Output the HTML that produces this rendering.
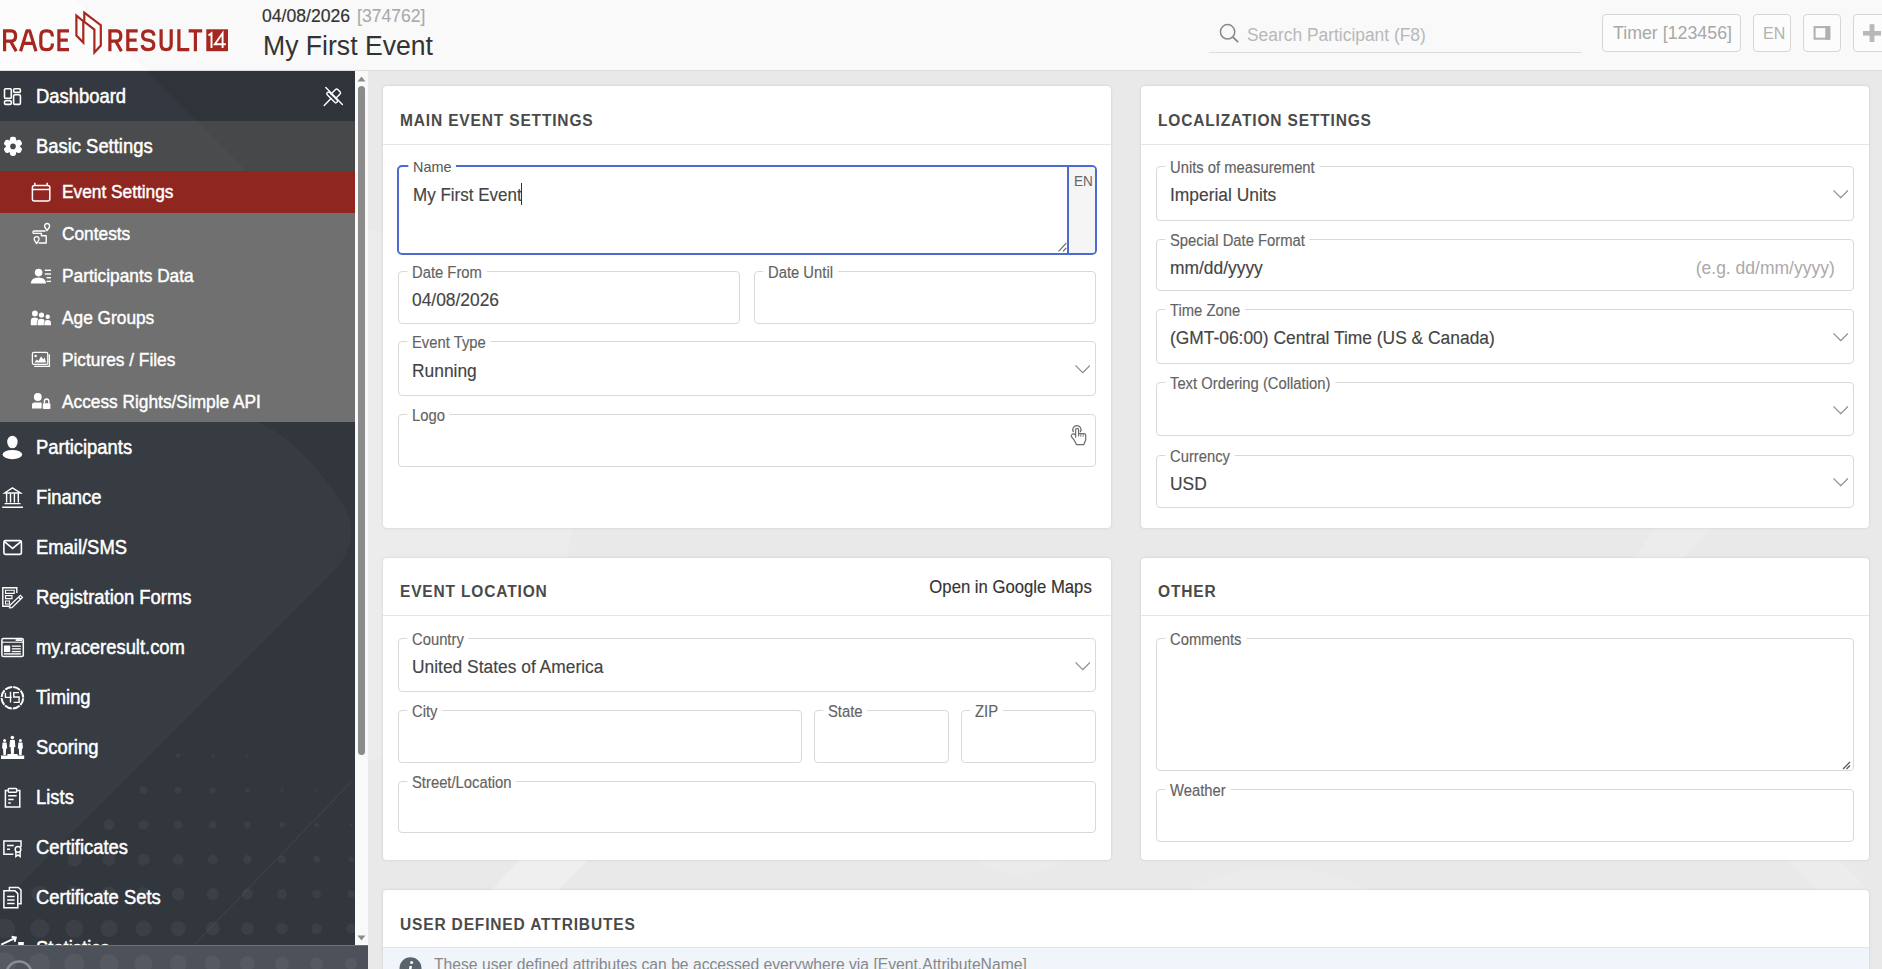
<!DOCTYPE html><html><head><meta charset="utf-8"><style>
html,body{margin:0;padding:0;}
body{width:1882px;height:969px;overflow:hidden;position:relative;background:#e9e9e9;font-family:"Liberation Sans", sans-serif;}
.t{position:absolute;white-space:nowrap;}
svg{overflow:hidden}
</style></head><body>
<div style="position:absolute;left:368px;top:71px;width:1514px;height:898px;background:#e9e9e9;"></div>
<svg style="position:absolute;left:368px;top:71px;" width="1514" height="898" viewBox="368 71 1514 898">
<circle cx="300" cy="495" r="274" fill="#ececec"/>
<polygon points="1656.7,527 1712.8,527 1682.7,559 1632.9,559" fill="#ececec"/>
<polygon points="520.7,859 588.8,859 557.6,891 490.7,891" fill="#efefef"/>
<polygon points="1786.6,859 1838.5,859 1870,891 1817.7,891" fill="#ececec"/>
<circle cx="1020" cy="800" r="74" fill="#ebebeb"/>
<circle cx="1277" cy="1050" r="183" fill="#ebebeb"/>


</svg>
<div style="position:absolute;left:0px;top:0px;width:1882px;height:70px;background:#f9f9f9;"></div>
<svg style="position:absolute;left:0px;top:0px;" width="1882" height="70" viewBox="0 0 1882 70"><polygon points="0,0 76,0 146,70 0,70" fill="#fcfcfc"/></svg>
<div style="position:absolute;left:0px;top:70px;width:1882px;height:1px;background:#dddddd;"></div>
<svg style="position:absolute;left:0px;top:0px;" width="240" height="70" viewBox="0 0 240 70"><g fill="none" stroke="#a5271f" stroke-width="3.2" stroke-linejoin="miter" stroke-linecap="butt">
<path d="M4.6,51.2 V30.9 H11.2 Q15.6,30.9 15.6,36 Q15.6,41.2 11.2,41.2 H4.6 M10.6,41.2 L16.2,51.2"/>
<path d="M20.6,51.2 L26.9,30.9 H29.7 L36,51.2 M23.6,43.4 H33" stroke-linejoin="round"/>
<path d="M52.4,36.6 Q52.4,30.9 47.3,30.9 H45.8 Q40.8,30.9 40.8,36.4 V44.2 Q40.8,49.6 45.8,49.6 H47.3 Q52.4,49.6 52.4,43.4"/>
<path d="M69,30.9 H58.9 V49.6 H69 M58.9,40.2 H67.8"/>
<path d="M109.9,51.2 V30.9 H116.4 Q120.8,30.9 120.8,36 Q120.8,41.2 116.4,41.2 H109.9 M115.8,41.2 L121.4,51.2"/>
<path d="M137.7,30.9 H127.8 V49.6 H137.7 M127.8,40.2 H136.6"/>
<path d="M154,35.6 Q153.6,30.9 148.2,30.9 Q142.6,30.9 142.6,35.4 Q142.6,39.6 148.2,40.2 Q153.8,40.8 153.8,45 Q153.8,49.6 148.2,49.6 Q142.6,49.6 142.2,45"/>
<path d="M161.1,29.3 V44.2 Q161.1,49.6 166.1,49.6 Q171.2,49.6 171.2,44.2 V29.3"/>
<path d="M178.9,29.3 V49.6 H189.3"/>
<path d="M188.6,30.9 H202.2 M195.4,30.9 V51.2"/>
</g>
<g fill="none" stroke="#a5271f" stroke-width="2.2" stroke-linejoin="miter">
<path d="M76.4,15.6 L83.3,21.2 V42.5 L76.4,35.6 Z"/>
<path d="M84.3,12.6 L100.8,25.2 V45.6 L94.4,52.4 V29.6 L84.3,21.8 Z"/>
</g>
<rect x="206.3" y="29.3" width="21.7" height="21.9" fill="#a5271f"/>
<g fill="none" stroke="#fff" stroke-width="1.9">
<path d="M208.5,35.4 L211.5,33.2 V48"/>
<path d="M222.6,48 V33.2 L214.8,44.2 H225.8"/>
</g></svg>
<div class="t" style="left:262px;top:3.97px;font-size:18.83px;line-height:24px;color:#333;font-weight:400;letter-spacing:0.00px;-webkit-text-stroke:0.2px #333;transform:scaleX(0.9346);transform-origin:0 0;">04/08/2026</div>
<div class="t" style="left:357px;top:3.97px;font-size:18.83px;line-height:24px;color:#aaa;font-weight:400;letter-spacing:0.00px;-webkit-text-stroke:0.1px #aaa;transform:scaleX(0.9346);transform-origin:0 0;">[374762]</div>
<div class="t" style="left:263px;top:26.64px;font-size:28.46px;line-height:37px;color:#333;font-weight:400;letter-spacing:0.00px;transform:scaleX(0.9346);transform-origin:0 0;">My First Event</div>
<div style="position:absolute;left:1209px;top:52px;width:373px;height:1px;background:#dddddd;"></div>
<svg style="position:absolute;left:1215px;top:20px;" width="30" height="30" viewBox="1215 20 30 30"><circle cx="1227.6" cy="31.8" r="7.2" fill="none" stroke="#8a8a8a" stroke-width="1.5"/><path d="M1232.8,37 L1238.2,42.2" stroke="#8a8a8a" stroke-width="1.8"/></svg>
<div class="t" style="left:1247px;top:22.55px;font-size:18.62px;line-height:24px;color:#b8b8b8;font-weight:400;letter-spacing:0.00px;transform:scaleX(0.9346);transform-origin:0 0;">Search Participant (F8)</div>
<div style="position:absolute;left:1602px;top:14px;width:139px;height:38px;box-sizing:border-box;border:1px solid #d6d6d6;border-radius:4px;background:#fcfcfc;"></div>
<div style="position:absolute;left:1753px;top:14px;width:38px;height:38px;box-sizing:border-box;border:1px solid #d6d6d6;border-radius:4px;background:#fcfcfc;"></div>
<div style="position:absolute;left:1803px;top:14px;width:38px;height:38px;box-sizing:border-box;border:1px solid #d6d6d6;border-radius:4px;background:#fcfcfc;"></div>
<div style="position:absolute;left:1853px;top:14px;width:40px;height:38px;box-sizing:border-box;border:1px solid #d6d6d6;border-radius:4px;background:#fcfcfc;"></div>
<div class="t" style="left:1613px;top:20.40px;font-size:19.05px;line-height:25px;color:#a8a8a8;font-weight:400;letter-spacing:0.00px;transform:scaleX(0.9346);transform-origin:0 0;">Timer [123456]</div>
<div class="t" style="left:1762.5px;top:23.07px;font-size:17.12px;line-height:22px;color:#b2b2b2;font-weight:400;letter-spacing:0.00px;transform:scaleX(0.9346);transform-origin:0 0;">EN</div>
<svg style="position:absolute;left:1810px;top:20px;" width="30" height="30" viewBox="1810 20 30 30"><rect x="1814.6" y="27.1" width="14.6" height="11.6" fill="none" stroke="#b0b0b0" stroke-width="2"/><rect x="1825.3" y="26.1" width="5" height="13.6" fill="#b0b0b0"/></svg>
<svg style="position:absolute;left:1860px;top:20px;" width="25" height="25" viewBox="1860 20 25 25"><rect x="1863" y="31" width="18" height="4.6" fill="#b8b8b8"/><rect x="1869.6" y="24.2" width="4.8" height="17.8" fill="#b8b8b8"/></svg>
<div style="position:absolute;left:0px;top:71px;width:355px;height:874px;background:#32363d;"></div>
<svg style="position:absolute;left:0px;top:71px;" width="355" height="874" viewBox="0 71 355 874">
<path d="M0,422 L258,422 Q300,440 340,500 Q365,535 335,570 L0,905 Z" fill="#373b42"/>
<g fill="#ffffff" fill-opacity="0.05">
<circle cx="5.2" cy="928.6" r="10.0"/><circle cx="5.2" cy="963.2" r="11.1"/><circle cx="39.8" cy="894.0" r="8.5"/><circle cx="39.8" cy="928.6" r="9.5"/><circle cx="39.8" cy="963.2" r="10.6"/><circle cx="74.4" cy="859.4" r="6.9"/><circle cx="74.4" cy="894.0" r="8.0"/><circle cx="74.4" cy="928.6" r="9.0"/><circle cx="74.4" cy="963.2" r="10.0"/><circle cx="109.0" cy="824.8" r="5.4"/><circle cx="109.0" cy="859.4" r="6.4"/><circle cx="109.0" cy="894.0" r="7.5"/><circle cx="109.0" cy="928.6" r="8.5"/><circle cx="109.0" cy="963.2" r="9.5"/><circle cx="143.6" cy="790.2" r="3.8"/><circle cx="143.6" cy="824.8" r="4.9"/><circle cx="143.6" cy="859.4" r="5.9"/><circle cx="143.6" cy="894.0" r="6.9"/><circle cx="143.6" cy="928.6" r="8.0"/><circle cx="143.6" cy="963.2" r="9.0"/><circle cx="178.2" cy="755.6" r="2.3"/><circle cx="178.2" cy="790.2" r="3.3"/><circle cx="178.2" cy="824.8" r="4.3"/><circle cx="178.2" cy="859.4" r="5.4"/><circle cx="178.2" cy="894.0" r="6.4"/><circle cx="178.2" cy="928.6" r="7.5"/><circle cx="178.2" cy="963.2" r="8.5"/><circle cx="212.8" cy="721.0" r="0.8"/><circle cx="212.8" cy="755.6" r="1.7"/><circle cx="212.8" cy="790.2" r="2.8"/><circle cx="212.8" cy="824.8" r="3.8"/><circle cx="212.8" cy="859.4" r="4.9"/><circle cx="212.8" cy="894.0" r="5.9"/><circle cx="212.8" cy="928.6" r="6.9"/><circle cx="212.8" cy="963.2" r="8.0"/><circle cx="247.4" cy="721.0" r="0.8"/><circle cx="247.4" cy="755.6" r="1.2"/><circle cx="247.4" cy="790.2" r="2.3"/><circle cx="247.4" cy="824.8" r="3.3"/><circle cx="247.4" cy="859.4" r="4.3"/><circle cx="247.4" cy="894.0" r="5.4"/><circle cx="247.4" cy="928.6" r="6.4"/><circle cx="247.4" cy="963.2" r="7.5"/><circle cx="282.0" cy="721.0" r="0.8"/><circle cx="282.0" cy="755.6" r="0.8"/><circle cx="282.0" cy="790.2" r="1.7"/><circle cx="282.0" cy="824.8" r="2.8"/><circle cx="282.0" cy="859.4" r="3.8"/><circle cx="282.0" cy="894.0" r="4.9"/><circle cx="282.0" cy="928.6" r="5.9"/><circle cx="282.0" cy="963.2" r="6.9"/><circle cx="316.6" cy="721.0" r="0.8"/><circle cx="316.6" cy="755.6" r="0.8"/><circle cx="316.6" cy="790.2" r="1.2"/><circle cx="316.6" cy="824.8" r="2.3"/><circle cx="316.6" cy="859.4" r="3.3"/><circle cx="316.6" cy="894.0" r="4.3"/><circle cx="316.6" cy="928.6" r="5.4"/><circle cx="316.6" cy="963.2" r="6.4"/><circle cx="351.2" cy="721.0" r="0.8"/><circle cx="351.2" cy="755.6" r="0.8"/><circle cx="351.2" cy="790.2" r="0.8"/><circle cx="351.2" cy="824.8" r="1.7"/><circle cx="351.2" cy="859.4" r="2.8"/><circle cx="351.2" cy="894.0" r="3.8"/><circle cx="351.2" cy="928.6" r="4.9"/><circle cx="351.2" cy="963.2" r="5.9"/>
</g>
<path d="M352,781 L190,949" stroke="#ffffff" stroke-opacity="0.05" stroke-width="1.2"/>

</svg>
<div style="position:absolute;left:0px;top:71px;width:355px;height:50px;background:#2f333a;"></div>
<svg style="position:absolute;left:0px;top:71px;" width="355" height="50" viewBox="0 71 355 50"><polygon points="0,71 147,71 197,121 0,121" fill="#343840"/></svg>
<div style="position:absolute;left:0px;top:121px;width:355px;height:50px;background:#474849;"></div>
<svg style="position:absolute;left:0px;top:121px;" width="355" height="50" viewBox="0 121 355 50"><polygon points="0,121 197,121 247,171 0,171" fill="#4a4b4c"/></svg>
<div style="position:absolute;left:0px;top:171px;width:355px;height:42px;background:#8f2620;"></div>
<div style="position:absolute;left:0px;top:213px;width:355px;height:209px;background:#6f706f;"></div>
<div style="position:absolute;left:355px;top:71px;width:13px;height:874px;background:#f9f9f9;"></div>
<div style="position:absolute;left:358px;top:86px;width:7px;height:669px;background:#8b8b8b;border-radius:4px;"></div>
<svg style="position:absolute;left:357px;top:76px;" width="9" height="6" viewBox="357 76 9 6"><polygon points="357.5,81.5 361.5,76.5 365.5,81.5" fill="#8b8b8b"/></svg>
<svg style="position:absolute;left:357px;top:935px;" width="9" height="6" viewBox="357 935 9 6"><polygon points="357.5,935.5 361.5,940.5 365.5,935.5" fill="#8b8b8b"/></svg>
<svg style="position:absolute;left:0px;top:71px;" width="355" height="874" viewBox="0 71 355 874">
<g fill="none" stroke="#fff" stroke-width="1.6">
 <rect x="4.5" y="88.8" width="6.8" height="9.6" rx="1.2"/>
 <rect x="4.5" y="100.8" width="6.8" height="3.6" rx="1.2"/>
 <rect x="13.6" y="88.8" width="6.8" height="3.6" rx="1.2"/>
 <rect x="13.6" y="94.8" width="6.8" height="9.6" rx="1.2"/>
</g>
<g fill="none" stroke="#fff" stroke-width="1.4" stroke-linecap="round" stroke-linejoin="round">
 <path d="M325.8,87.6 L342.4,104.4"/>
 <g transform="translate(332.4,97.2) rotate(45)">
  <rect x="-6.8" y="-1.4" width="13.6" height="3.4" rx="1.5"/>
  <path d="M-3.2,-1.4 V-7.6 Q-3.2,-9.2 -1.6,-9.2 H1.6 Q3.2,-9.2 3.2,-7.6 V-1.4"/>
  <path d="M0,2 V11.6"/>
 </g>
</g>
<g fill="#fff">
 <circle cx="13" cy="146.4" r="7"/>
 <rect x="9.9" y="136.8" width="6.2" height="19.2" rx="2.4"/>
 <rect x="9.9" y="136.8" width="6.2" height="19.2" rx="2.4" transform="rotate(60 13 146.4)"/>
 <rect x="9.9" y="136.8" width="6.2" height="19.2" rx="2.4" transform="rotate(120 13 146.4)"/>
</g>
<circle cx="13" cy="146.4" r="2.8" fill="#474849"/>
<g fill="none" stroke="#fff" stroke-width="1.5">
 <rect x="32.4" y="185.4" width="17.4" height="15.6" rx="2"/>
 <path d="M32.4,189.6 H49.8 M34.8,182.8 V185.4 M47.2,182.8 V185.4"/>
</g>
<g fill="none" stroke="#fff" stroke-width="1.4" stroke-linejoin="round">
 <path d="M45.6,231 H34 Q33,231 33,232.2 Q33,233.4 34,233.4 H41.4 V235.8 H46.2 V243 H38.6"/>
 <path d="M47.1,230.6 L44.8,227 A2.5,2.5 0 1,1 49.4,227 Z"/>
 <path d="M36.6,243.6 L34.4,240 A2.4,2.4 0 1,1 38.8,240 Z"/>
</g>
<g fill="#fff">
 <circle cx="38.6" cy="272.6" r="3.8"/>
 <path d="M30.8,283.5 Q31,277.4 38.4,277.4 Q45.8,277.4 46,283.5 Z"/>
 <rect x="44.8" y="269.6" width="6.2" height="1.4"/>
 <rect x="44.8" y="273.3" width="6.2" height="1.4"/>
 <rect x="46.6" y="277" width="4.4" height="1.4"/>
 <rect x="46.6" y="280.7" width="4.4" height="1.4"/>
 <circle cx="34.9" cy="313.4" r="2.9"/>
 <circle cx="41.5" cy="315" r="2.6"/>
 <circle cx="47.7" cy="316.8" r="2.2"/>
 <path d="M30.8,325.2 V320.8 Q30.8,317.4 34.9,317.4 Q37.8,317.4 38.2,319 Q36.6,320.6 36.8,325.2 Z"/>
 <path d="M37.6,325.2 V322 Q37.6,318.8 41.5,318.8 Q44.2,318.8 44.6,320.6 Q43.8,321.8 43.8,325.2 Z"/>
 <path d="M44.4,325.2 V323.4 Q44.4,320 47.7,320 Q51,320 51,323.4 V325.2 Z"/>
</g>
<g fill="none" stroke="#fff" stroke-width="1.3">
 <rect x="32.4" y="352.4" width="15.4" height="12" rx="1.5"/>
 <path d="M34.2,366.4 H49.4 V354.6" />
</g>
<g fill="#fff">
 <circle cx="35.6" cy="356" r="1.2"/>
 <path d="M34.4,362.6 L36.8,359.6 L38.4,361 L41.2,356.2 L43.2,359.4 L44.6,357.2 L46,362.6 Z"/>
 <circle cx="37.8" cy="397" r="3.9"/>
 <path d="M32,408.4 V404.6 Q32,402.4 34.4,402.4 H41.2 Q41.6,402.4 41.6,403 V408.4 Z"/>
 <rect x="42.8" y="403.2" width="7.6" height="5.8" rx="0.8"/>
</g>
<path d="M44.4,403.4 V401.2 A2.2,2.2 0 0,1 48.8,401.2 V403.4" fill="none" stroke="#fff" stroke-width="1.4"/>
</svg>
<div class="t" style="left:36px;top:83.18px;font-size:19.69px;line-height:26px;color:#fff;font-weight:400;letter-spacing:0.00px;-webkit-text-stroke:0.5px #fff;transform:scaleX(0.9346);transform-origin:0 0;">Dashboard</div>
<div class="t" style="left:36px;top:133.18px;font-size:19.69px;line-height:26px;color:#fff;font-weight:400;letter-spacing:0.00px;-webkit-text-stroke:0.5px #fff;transform:scaleX(0.9346);transform-origin:0 0;">Basic Settings</div>
<div class="t" style="left:62px;top:179.59px;font-size:18.51px;line-height:24px;color:#fff;font-weight:400;letter-spacing:0.00px;-webkit-text-stroke:0.45px #fff;transform:scaleX(0.9346);transform-origin:0 0;">Event Settings</div>
<div class="t" style="left:62px;top:221.59px;font-size:18.51px;line-height:24px;color:#fff;font-weight:400;letter-spacing:0.00px;-webkit-text-stroke:0.45px #fff;transform:scaleX(0.9346);transform-origin:0 0;">Contests</div>
<div class="t" style="left:62px;top:263.59px;font-size:18.51px;line-height:24px;color:#fff;font-weight:400;letter-spacing:0.00px;-webkit-text-stroke:0.45px #fff;transform:scaleX(0.9346);transform-origin:0 0;">Participants Data</div>
<div class="t" style="left:62px;top:305.59px;font-size:18.51px;line-height:24px;color:#fff;font-weight:400;letter-spacing:0.00px;-webkit-text-stroke:0.45px #fff;transform:scaleX(0.9346);transform-origin:0 0;">Age Groups</div>
<div class="t" style="left:62px;top:347.59px;font-size:18.51px;line-height:24px;color:#fff;font-weight:400;letter-spacing:0.00px;-webkit-text-stroke:0.45px #fff;transform:scaleX(0.9346);transform-origin:0 0;">Pictures / Files</div>
<div class="t" style="left:62px;top:389.59px;font-size:18.51px;line-height:24px;color:#fff;font-weight:400;letter-spacing:0.00px;-webkit-text-stroke:0.45px #fff;transform:scaleX(0.9346);transform-origin:0 0;">Access Rights/Simple API</div>
<div class="t" style="left:36px;top:434.18px;font-size:19.69px;line-height:26px;color:#fff;font-weight:400;letter-spacing:0.00px;-webkit-text-stroke:0.5px #fff;transform:scaleX(0.9346);transform-origin:0 0;">Participants</div>
<div class="t" style="left:36px;top:484.18px;font-size:19.69px;line-height:26px;color:#fff;font-weight:400;letter-spacing:0.00px;-webkit-text-stroke:0.5px #fff;transform:scaleX(0.9346);transform-origin:0 0;">Finance</div>
<div class="t" style="left:36px;top:534.18px;font-size:19.69px;line-height:26px;color:#fff;font-weight:400;letter-spacing:0.00px;-webkit-text-stroke:0.5px #fff;transform:scaleX(0.9346);transform-origin:0 0;">Email/SMS</div>
<div class="t" style="left:36px;top:584.18px;font-size:19.69px;line-height:26px;color:#fff;font-weight:400;letter-spacing:0.00px;-webkit-text-stroke:0.5px #fff;transform:scaleX(0.9346);transform-origin:0 0;">Registration Forms</div>
<div class="t" style="left:36px;top:634.18px;font-size:19.69px;line-height:26px;color:#fff;font-weight:400;letter-spacing:0.00px;-webkit-text-stroke:0.5px #fff;transform:scaleX(0.9346);transform-origin:0 0;">my.raceresult.com</div>
<div class="t" style="left:36px;top:684.18px;font-size:19.69px;line-height:26px;color:#fff;font-weight:400;letter-spacing:0.00px;-webkit-text-stroke:0.5px #fff;transform:scaleX(0.9346);transform-origin:0 0;">Timing</div>
<div class="t" style="left:36px;top:734.18px;font-size:19.69px;line-height:26px;color:#fff;font-weight:400;letter-spacing:0.00px;-webkit-text-stroke:0.5px #fff;transform:scaleX(0.9346);transform-origin:0 0;">Scoring</div>
<div class="t" style="left:36px;top:784.18px;font-size:19.69px;line-height:26px;color:#fff;font-weight:400;letter-spacing:0.00px;-webkit-text-stroke:0.5px #fff;transform:scaleX(0.9346);transform-origin:0 0;">Lists</div>
<div class="t" style="left:36px;top:834.18px;font-size:19.69px;line-height:26px;color:#fff;font-weight:400;letter-spacing:0.00px;-webkit-text-stroke:0.5px #fff;transform:scaleX(0.9346);transform-origin:0 0;">Certificates</div>
<div class="t" style="left:36px;top:884.18px;font-size:19.69px;line-height:26px;color:#fff;font-weight:400;letter-spacing:0.00px;-webkit-text-stroke:0.5px #fff;transform:scaleX(0.9346);transform-origin:0 0;">Certificate Sets</div>
<div class="t" style="left:36px;top:935.18px;font-size:19.69px;line-height:26px;color:#fff;font-weight:400;letter-spacing:0.00px;-webkit-text-stroke:0.5px #fff;transform:scaleX(0.9346);transform-origin:0 0;">Statistics</div>
<svg style="position:absolute;left:0px;top:71px;" width="355" height="874" viewBox="0 71 355 874">
<g fill="#fff">
 <ellipse cx="12.4" cy="442" rx="5.2" ry="6.3"/>
 <ellipse cx="12.4" cy="454.6" rx="9.8" ry="4.6"/>
</g>
<g fill="none" stroke="#fff" stroke-width="1.4">
 <path d="M4.6,493 L12.4,487.8 L20.6,493 Z"/>
 <path d="M6.6,493.5 V502.5 M10.5,493.5 V502.5 M14.4,493.5 V502.5 M18.3,493.5 V502.5"/>
 <path d="M4.6,503.6 H20.6 M2.2,507.2 H23"/>
 <rect x="3.9" y="540.6" width="17.5" height="13.8" rx="1.6" stroke-width="1.6"/>
 <path d="M4.4,541.6 L12.6,548.4 L20.9,541.6" stroke-width="1.6"/>
 <path d="M16.8,593 V587.8 H2.8 V606.2 H9.2"/>
 <path d="M5.5,590.2 H14.2 V593.4 H5.5 Z M5.5,595.6 H12 V598.6 H5.5 Z M5.5,601 H9.5 V604 H5.5 Z" stroke-width="1.1"/>
 <path d="M20.4,595.4 L22.4,597.4 L12,607.6 L9.6,607.8 L9.9,605.4 Z M18.6,597.2 L20.6,599.2" stroke-width="1.3"/>
 <rect x="1.9" y="638.4" width="21.4" height="18" rx="1.5" stroke-width="1.5"/>
 <path d="M2,642.2 H23.2" stroke-width="1.1"/>
</g>
<g fill="#fff">
 <rect x="3.9" y="645.5" width="6.3" height="6.6"/>
 <rect x="11.8" y="645.5" width="9" height="1.3"/>
 <rect x="11.8" y="648.2" width="9" height="1.3"/>
 <rect x="11.8" y="650.9" width="9" height="1.3"/>
 <rect x="3.9" y="653.2" width="17" height="1.4"/>
 <rect x="15.6" y="639.2" width="6.4" height="1.8"/>
</g>
<circle cx="12.4" cy="697.7" r="10.8" fill="none" stroke="#fff" stroke-width="2" stroke-dasharray="7.48 1.0" stroke-dashoffset="7.98"/>
<g fill="none" stroke="#fff" stroke-width="1.4">
 <path d="M5.4,692.8 V697.4 H11.8 M10.5,691.8 V702.4"/>
 <path d="M19,692.6 H13.8 V697 H19.1 V702.4 H13.6"/>
</g>
<g fill="#fff">
 <circle cx="12.4" cy="737.6" r="1.8"/>
 <path d="M10,740 H14.8 L15.4,747 H14.2 L13.8,754.6 H11 L10.6,747 H9.4 Z"/>
 <circle cx="4.6" cy="740.6" r="1.5"/>
 <path d="M2.6,742.6 H6.6 L7.2,748.6 H6.2 L5.8,755 H3.4 L3,748.6 H2 Z"/>
 <circle cx="20.4" cy="740.6" r="1.5"/>
 <path d="M18.4,742.6 H22.4 L23,748.6 H22 L21.6,755 H19.2 L18.8,748.6 H17.8 Z"/>
 <path d="M1,759 V755.6 H7.4 V754 H17.6 V755.6 H24.2 V759 Z"/>
</g>
<g fill="none" stroke="#fff" stroke-width="1.5">
 <path d="M7.6,790.4 H5.4 V807 H19.8 V790.4 H17.4"/>
 <rect x="8.2" y="788.6" width="8.6" height="3.6" rx="1"/>
 <path d="M8.2,795.8 H16.6 M8.2,799.4 H13.6 M8.2,803 H10.8"/>
 <path d="M13.4,854.2 H3.9 V841 H21 V847"/>
 <path d="M7,845.6 H13.8 M7,849.2 H10"/>
 <circle cx="18" cy="849.4" r="2.8"/>
 <path d="M15.9,851.4 V856.6 L18,855 L20.1,856.6 V851.4"/>
 <path d="M9.4,890.2 V887.4 H18.4 L21,890 V903.8 H18.2"/>
 <path d="M3.9,890.8 H15 L17.8,893.6 V907.8 H3.9 Z"/>
 <path d="M7.2,896.6 H14.6 M7.2,900 H14.6 M7.2,903.4 H14.6"/>
</g>
<g fill="none" stroke="#fff" stroke-width="2">
 <path d="M1.2,944.6 L15.4,937.8 M11.6,936.8 L15.8,937.6 L14.6,941.8"/>
</g>
<rect x="18.2" y="942" width="5.6" height="4" fill="#fff"/>
</svg>
<div style="position:absolute;left:0px;top:945px;width:368px;height:24px;background:#4d5159;box-shadow:inset 0 1px 0 #6d7075;"></div>
<svg style="position:absolute;left:0px;top:946px;" width="368" height="23" viewBox="0 946 368 23"><circle cx="5.2" cy="963.6" r="11.1" fill="#fff" fill-opacity="0.05"/><circle cx="39.8" cy="963.6" r="10.5" fill="#fff" fill-opacity="0.05"/><circle cx="74.4" cy="963.6" r="10.0" fill="#fff" fill-opacity="0.05"/><circle cx="109.0" cy="963.6" r="9.5" fill="#fff" fill-opacity="0.05"/><circle cx="143.6" cy="963.6" r="9.0" fill="#fff" fill-opacity="0.05"/><circle cx="178.2" cy="963.6" r="8.5" fill="#fff" fill-opacity="0.05"/><circle cx="212.8" cy="963.6" r="7.9" fill="#fff" fill-opacity="0.05"/><circle cx="247.4" cy="963.6" r="7.4" fill="#fff" fill-opacity="0.05"/><circle cx="282.0" cy="963.6" r="6.9" fill="#fff" fill-opacity="0.05"/><circle cx="316.6" cy="963.6" r="6.4" fill="#fff" fill-opacity="0.05"/><circle cx="351.2" cy="963.6" r="5.9" fill="#fff" fill-opacity="0.05"/></svg>
<svg style="position:absolute;left:0px;top:946px;" width="368" height="23" viewBox="0 946 368 23"><circle cx="19" cy="974" r="12.5" fill="none" stroke="#8a8d91" stroke-width="2.6"/></svg>
<div style="position:absolute;left:383px;top:86px;width:728px;height:442px;background:#fff;border-radius:4px;box-shadow:0 0 3px rgba(0,0,0,0.12);"></div>
<div style="position:absolute;left:1141px;top:86px;width:728px;height:442px;background:#fff;border-radius:4px;box-shadow:0 0 3px rgba(0,0,0,0.12);"></div>
<div style="position:absolute;left:383px;top:558px;width:728px;height:302px;background:#fff;border-radius:4px;box-shadow:0 0 3px rgba(0,0,0,0.12);"></div>
<div style="position:absolute;left:1141px;top:558px;width:728px;height:302px;background:#fff;border-radius:4px;box-shadow:0 0 3px rgba(0,0,0,0.12);"></div>
<div style="position:absolute;left:383px;top:890px;width:1486px;height:200px;background:#fff;border-radius:4px;box-shadow:0 0 3px rgba(0,0,0,0.12);"></div>
<div style="position:absolute;left:383px;top:144px;width:728px;height:1px;background:#e6e6e6;"></div>
<div style="position:absolute;left:1141px;top:144px;width:728px;height:1px;background:#e6e6e6;"></div>
<div style="position:absolute;left:383px;top:615px;width:728px;height:1px;background:#e6e6e6;"></div>
<div style="position:absolute;left:1141px;top:615px;width:728px;height:1px;background:#e6e6e6;"></div>
<div style="position:absolute;left:383px;top:947px;width:1486px;height:1px;background:#e6e6e6;"></div>
<div style="position:absolute;left:383px;top:948px;width:1486px;height:30px;background:#f0f5fc;"></div>
<div class="t" style="left:400px;top:110.18px;font-size:16.80px;line-height:22px;color:#4a4a4a;font-weight:700;letter-spacing:0.90px;transform:scaleX(0.925);transform-origin:0 0;">MAIN EVENT SETTINGS</div>
<div class="t" style="left:1158px;top:110.18px;font-size:16.80px;line-height:22px;color:#4a4a4a;font-weight:700;letter-spacing:0.90px;transform:scaleX(0.925);transform-origin:0 0;">LOCALIZATION SETTINGS</div>
<div class="t" style="left:400px;top:581.18px;font-size:16.80px;line-height:22px;color:#4a4a4a;font-weight:700;letter-spacing:0.90px;transform:scaleX(0.925);transform-origin:0 0;">EVENT LOCATION</div>
<div class="t" style="left:1158px;top:581.18px;font-size:16.80px;line-height:22px;color:#4a4a4a;font-weight:700;letter-spacing:0.90px;transform:scaleX(0.925);transform-origin:0 0;">OTHER</div>
<div class="t" style="left:400px;top:914.18px;font-size:16.80px;line-height:22px;color:#4a4a4a;font-weight:700;letter-spacing:0.90px;transform:scaleX(0.925);transform-origin:0 0;">USER DEFINED ATTRIBUTES</div>
<div class="t" style="right:790px;top:575.81px;font-size:17.87px;line-height:23px;color:#333;font-weight:400;letter-spacing:0.00px;-webkit-text-stroke:0.15px #333;transform:scaleX(0.9346);transform-origin:100% 0;">Open in Google Maps</div>
<div style="position:absolute;left:398px;top:271px;width:342px;height:53px;box-sizing:border-box;border:1px solid #d9d9d9;border-radius:4px;background:#fff;"></div>
<div class="t" style="left:411.5px;top:261.51px;font-size:15.84px;line-height:21px;color:#636363;font-weight:400;letter-spacing:0.00px;-webkit-text-stroke:0.15px #636363;transform:scaleX(0.9346);transform-origin:0 0;"><span style="background:#fff;padding:0 5px;margin-left:-5px">Date From</span></div>
<div class="t" style="left:412px;top:288.05px;font-size:18.62px;line-height:24px;color:#444;font-weight:400;letter-spacing:0.00px;-webkit-text-stroke:0.15px #444;transform:scaleX(0.9346);transform-origin:0 0;">04/08/2026</div>
<div style="position:absolute;left:754px;top:271px;width:342px;height:53px;box-sizing:border-box;border:1px solid #d9d9d9;border-radius:4px;background:#fff;"></div>
<div class="t" style="left:767.5px;top:261.51px;font-size:15.84px;line-height:21px;color:#636363;font-weight:400;letter-spacing:0.00px;-webkit-text-stroke:0.15px #636363;transform:scaleX(0.9346);transform-origin:0 0;"><span style="background:#fff;padding:0 5px;margin-left:-5px">Date Until</span></div>
<div style="position:absolute;left:398px;top:341px;width:698px;height:55px;box-sizing:border-box;border:1px solid #d9d9d9;border-radius:4px;background:#fff;"></div>
<div class="t" style="left:411.5px;top:331.51px;font-size:15.84px;line-height:21px;color:#636363;font-weight:400;letter-spacing:0.00px;-webkit-text-stroke:0.15px #636363;transform:scaleX(0.9346);transform-origin:0 0;"><span style="background:#fff;padding:0 5px;margin-left:-5px">Event Type</span></div>
<div class="t" style="left:412px;top:359.35px;font-size:18.62px;line-height:24px;color:#444;font-weight:400;letter-spacing:0.00px;-webkit-text-stroke:0.15px #444;transform:scaleX(0.9346);transform-origin:0 0;">Running</div>
<svg style="position:absolute;left:1074px;top:363.0px;" width="16" height="12" viewBox="1074 363.0 16 12"><path d="M1075.5,365.4 L1082.75,372.6 L1090,365.4" fill="none" stroke="#8c8c8c" stroke-width="1.3"/></svg>
<div style="position:absolute;left:398px;top:414px;width:698px;height:53px;box-sizing:border-box;border:1px solid #d9d9d9;border-radius:4px;background:#fff;"></div>
<div class="t" style="left:411.5px;top:404.51px;font-size:15.84px;line-height:21px;color:#636363;font-weight:400;letter-spacing:0.00px;-webkit-text-stroke:0.15px #636363;transform:scaleX(0.9346);transform-origin:0 0;"><span style="background:#fff;padding:0 5px;margin-left:-5px">Logo</span></div>
<div style="position:absolute;left:1156px;top:166px;width:698px;height:55px;box-sizing:border-box;border:1px solid #d9d9d9;border-radius:4px;background:#fff;"></div>
<div class="t" style="left:1169.5px;top:156.51px;font-size:15.84px;line-height:21px;color:#636363;font-weight:400;letter-spacing:0.00px;-webkit-text-stroke:0.15px #636363;transform:scaleX(0.9346);transform-origin:0 0;"><span style="background:#fff;padding:0 5px;margin-left:-5px">Units of measurement</span></div>
<div class="t" style="left:1170px;top:183.05px;font-size:18.62px;line-height:24px;color:#444;font-weight:400;letter-spacing:0.00px;-webkit-text-stroke:0.15px #444;transform:scaleX(0.9346);transform-origin:0 0;">Imperial Units</div>
<svg style="position:absolute;left:1832px;top:188.0px;" width="16" height="12" viewBox="1832 188.0 16 12"><path d="M1833.5,190.4 L1840.75,197.6 L1848,190.4" fill="none" stroke="#8c8c8c" stroke-width="1.3"/></svg>
<div style="position:absolute;left:1156px;top:239px;width:698px;height:52px;box-sizing:border-box;border:1px solid #d9d9d9;border-radius:4px;background:#fff;"></div>
<div class="t" style="left:1169.5px;top:229.51px;font-size:15.84px;line-height:21px;color:#636363;font-weight:400;letter-spacing:0.00px;-webkit-text-stroke:0.15px #636363;transform:scaleX(0.9346);transform-origin:0 0;"><span style="background:#fff;padding:0 5px;margin-left:-5px">Special Date Format</span></div>
<div class="t" style="left:1170px;top:256.05px;font-size:18.62px;line-height:24px;color:#444;font-weight:400;letter-spacing:0.00px;-webkit-text-stroke:0.15px #444;transform:scaleX(0.9346);transform-origin:0 0;">mm/dd/yyyy</div>
<div class="t" style="right:47.5px;top:255.51px;font-size:18.73px;line-height:24px;color:#aaa;font-weight:400;letter-spacing:0.00px;transform:scaleX(0.9346);transform-origin:100% 0;">(e.g. dd/mm/yyyy)</div>
<div style="position:absolute;left:1156px;top:309px;width:698px;height:55px;box-sizing:border-box;border:1px solid #d9d9d9;border-radius:4px;background:#fff;"></div>
<div class="t" style="left:1169.5px;top:299.51px;font-size:15.84px;line-height:21px;color:#636363;font-weight:400;letter-spacing:0.00px;-webkit-text-stroke:0.15px #636363;transform:scaleX(0.9346);transform-origin:0 0;"><span style="background:#fff;padding:0 5px;margin-left:-5px">Time Zone</span></div>
<div class="t" style="left:1170px;top:326.05px;font-size:18.62px;line-height:24px;color:#444;font-weight:400;letter-spacing:0.00px;-webkit-text-stroke:0.15px #444;transform:scaleX(0.9346);transform-origin:0 0;">(GMT-06:00) Central Time (US &amp; Canada)</div>
<svg style="position:absolute;left:1832px;top:331.0px;" width="16" height="12" viewBox="1832 331.0 16 12"><path d="M1833.5,333.4 L1840.75,340.6 L1848,333.4" fill="none" stroke="#8c8c8c" stroke-width="1.3"/></svg>
<div style="position:absolute;left:1156px;top:382px;width:698px;height:54px;box-sizing:border-box;border:1px solid #d9d9d9;border-radius:4px;background:#fff;"></div>
<div class="t" style="left:1169.5px;top:372.51px;font-size:15.84px;line-height:21px;color:#636363;font-weight:400;letter-spacing:0.00px;-webkit-text-stroke:0.15px #636363;transform:scaleX(0.9346);transform-origin:0 0;"><span style="background:#fff;padding:0 5px;margin-left:-5px">Text Ordering (Collation)</span></div>
<svg style="position:absolute;left:1832px;top:403.5px;" width="16" height="12" viewBox="1832 403.5 16 12"><path d="M1833.5,405.9 L1840.75,413.1 L1848,405.9" fill="none" stroke="#8c8c8c" stroke-width="1.3"/></svg>
<div style="position:absolute;left:1156px;top:455px;width:698px;height:53px;box-sizing:border-box;border:1px solid #d9d9d9;border-radius:4px;background:#fff;"></div>
<div class="t" style="left:1169.5px;top:445.51px;font-size:15.84px;line-height:21px;color:#636363;font-weight:400;letter-spacing:0.00px;-webkit-text-stroke:0.15px #636363;transform:scaleX(0.9346);transform-origin:0 0;"><span style="background:#fff;padding:0 5px;margin-left:-5px">Currency</span></div>
<div class="t" style="left:1170px;top:472.05px;font-size:18.62px;line-height:24px;color:#444;font-weight:400;letter-spacing:0.00px;-webkit-text-stroke:0.15px #444;transform:scaleX(0.9346);transform-origin:0 0;">USD</div>
<svg style="position:absolute;left:1832px;top:476.0px;" width="16" height="12" viewBox="1832 476.0 16 12"><path d="M1833.5,478.4 L1840.75,485.6 L1848,478.4" fill="none" stroke="#8c8c8c" stroke-width="1.3"/></svg>
<div style="position:absolute;left:398px;top:638px;width:698px;height:54px;box-sizing:border-box;border:1px solid #d9d9d9;border-radius:4px;background:#fff;"></div>
<div class="t" style="left:411.5px;top:628.51px;font-size:15.84px;line-height:21px;color:#636363;font-weight:400;letter-spacing:0.00px;-webkit-text-stroke:0.15px #636363;transform:scaleX(0.9346);transform-origin:0 0;"><span style="background:#fff;padding:0 5px;margin-left:-5px">Country</span></div>
<div class="t" style="left:412px;top:655.05px;font-size:18.62px;line-height:24px;color:#444;font-weight:400;letter-spacing:0.00px;-webkit-text-stroke:0.15px #444;transform:scaleX(0.9346);transform-origin:0 0;">United States of America</div>
<svg style="position:absolute;left:1074px;top:659.5px;" width="16" height="12" viewBox="1074 659.5 16 12"><path d="M1075.5,661.9 L1082.75,669.1 L1090,661.9" fill="none" stroke="#8c8c8c" stroke-width="1.3"/></svg>
<div style="position:absolute;left:398px;top:710px;width:404px;height:53px;box-sizing:border-box;border:1px solid #d9d9d9;border-radius:4px;background:#fff;"></div>
<div class="t" style="left:411.5px;top:700.51px;font-size:15.84px;line-height:21px;color:#636363;font-weight:400;letter-spacing:0.00px;-webkit-text-stroke:0.15px #636363;transform:scaleX(0.9346);transform-origin:0 0;"><span style="background:#fff;padding:0 5px;margin-left:-5px">City</span></div>
<div style="position:absolute;left:814px;top:710px;width:135px;height:53px;box-sizing:border-box;border:1px solid #d9d9d9;border-radius:4px;background:#fff;"></div>
<div class="t" style="left:827.5px;top:700.51px;font-size:15.84px;line-height:21px;color:#636363;font-weight:400;letter-spacing:0.00px;-webkit-text-stroke:0.15px #636363;transform:scaleX(0.9346);transform-origin:0 0;"><span style="background:#fff;padding:0 5px;margin-left:-5px">State</span></div>
<div style="position:absolute;left:961px;top:710px;width:135px;height:53px;box-sizing:border-box;border:1px solid #d9d9d9;border-radius:4px;background:#fff;"></div>
<div class="t" style="left:974.5px;top:700.51px;font-size:15.84px;line-height:21px;color:#636363;font-weight:400;letter-spacing:0.00px;-webkit-text-stroke:0.15px #636363;transform:scaleX(0.9346);transform-origin:0 0;"><span style="background:#fff;padding:0 5px;margin-left:-5px">ZIP</span></div>
<div style="position:absolute;left:398px;top:781px;width:698px;height:52px;box-sizing:border-box;border:1px solid #d9d9d9;border-radius:4px;background:#fff;"></div>
<div class="t" style="left:411.5px;top:771.51px;font-size:15.84px;line-height:21px;color:#636363;font-weight:400;letter-spacing:0.00px;-webkit-text-stroke:0.15px #636363;transform:scaleX(0.9346);transform-origin:0 0;"><span style="background:#fff;padding:0 5px;margin-left:-5px">Street/Location</span></div>
<div style="position:absolute;left:1156px;top:638px;width:698px;height:133px;box-sizing:border-box;border:1px solid #d9d9d9;border-radius:4px;background:#fff;"></div>
<div class="t" style="left:1169.5px;top:628.51px;font-size:15.84px;line-height:21px;color:#636363;font-weight:400;letter-spacing:0.00px;-webkit-text-stroke:0.15px #636363;transform:scaleX(0.9346);transform-origin:0 0;"><span style="background:#fff;padding:0 5px;margin-left:-5px">Comments</span></div>
<div style="position:absolute;left:1156px;top:789px;width:698px;height:53px;box-sizing:border-box;border:1px solid #d9d9d9;border-radius:4px;background:#fff;"></div>
<div class="t" style="left:1169.5px;top:779.51px;font-size:15.84px;line-height:21px;color:#636363;font-weight:400;letter-spacing:0.00px;-webkit-text-stroke:0.15px #636363;transform:scaleX(0.9346);transform-origin:0 0;"><span style="background:#fff;padding:0 5px;margin-left:-5px">Weather</span></div>
<svg style="position:absolute;left:1840px;top:758px;" width="14" height="14" viewBox="1840 758 14 14"><path d="M1843,769 L1850,762 M1846.5,769 L1850,765.5" stroke="#555" stroke-width="1.2"/></svg>
<svg style="position:absolute;left:1066px;top:420px;" width="26" height="28" viewBox="1066 420 26 28"><g fill="none" stroke="#6e6e6e" stroke-width="1.25" stroke-linejoin="round" stroke-linecap="round">
<path d="M1073.3,431.6 A4.1,4.1 0 1,1 1080.5,431.6"/>
<path d="M1078.6,433.6 H1084 Q1085.7,433.6 1085.7,435.6 V440 L1083.8,444.6 H1076.4 L1074.4,440.4 L1071.4,436.6 Q1070.8,435.2 1072.2,434.2 Q1073.6,433.4 1075.6,435" fill="#fff"/>
<path d="M1075.6,437.2 V430 Q1075.6,428.4 1077.1,428.4 Q1078.6,428.4 1078.6,430 V435.8" fill="#fff"/>
<path d="M1080.8,433.8 V436.4 M1083.2,433.8 V436.4" stroke-width="0.9"/>
</g></svg>
<div style="position:absolute;left:397px;top:165px;width:700px;height:90px;box-sizing:border-box;border:2px solid #4c6bcf;border-radius:5px;background:#fff;"></div>
<div style="position:absolute;left:1069px;top:167px;width:26px;height:86px;background:#f5f5f5;border-radius:0 3px 3px 0;"></div>
<div style="position:absolute;left:1067px;top:167px;width:2px;height:86px;background:#4c6bcf;"></div>
<div class="t" style="left:1073.5px;top:172.46px;font-size:14.55px;line-height:19px;color:#666;font-weight:400;letter-spacing:0.00px;transform:scaleX(0.9346);transform-origin:0 0;">EN</div>
<div class="t" style="left:413px;top:156.66px;font-size:15.41px;line-height:20px;color:#555;font-weight:400;letter-spacing:0.00px;transform:scaleX(0.9346);transform-origin:0 0;"><span style="background:#fff;padding:0 5px;margin-left:-5px">Name</span></div>
<div class="t" style="left:412.5px;top:182.70px;font-size:18.19px;line-height:24px;color:#444;font-weight:400;letter-spacing:0.00px;-webkit-text-stroke:0.15px #444;transform:scaleX(0.9346);transform-origin:0 0;">My First Event</div>
<div style="position:absolute;left:521px;top:183px;width:1px;height:22px;background:#333;"></div>
<svg style="position:absolute;left:1055px;top:240px;" width="14" height="14" viewBox="1055 240 14 14"><path d="M1058.6,251.4 L1066.3,243.1 M1063,251.4 L1066.3,247.8" stroke="#666" stroke-width="1.2"/></svg>
<svg style="position:absolute;left:395px;top:950px;" width="30" height="30" viewBox="395 950 30 30"><circle cx="410.5" cy="968.3" r="11" fill="#5b636d"/><circle cx="411.6" cy="962.4" r="1.5" fill="#fff"/><path d="M410.8,966 L409.2,975" stroke="#fff" stroke-width="2.4"/></svg>
<div class="t" style="left:433.5px;top:953.58px;font-size:16.80px;line-height:22px;color:#888;font-weight:400;letter-spacing:0.00px;transform:scaleX(0.9346);transform-origin:0 0;">These user defined attributes can be accessed everywhere via [Event.AttributeName]</div>
</body></html>
